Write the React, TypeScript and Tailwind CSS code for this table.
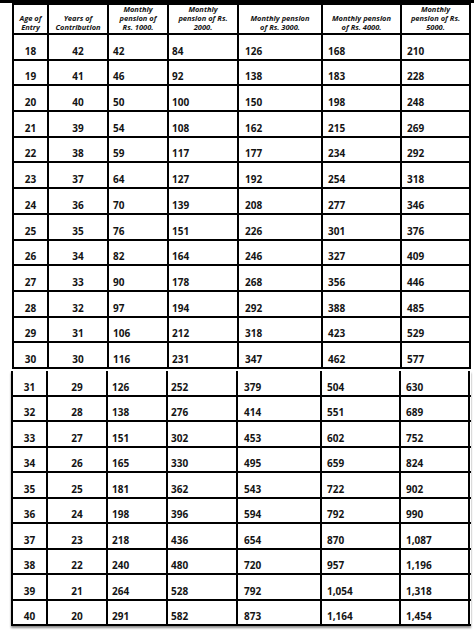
const upperRows: string[][] = [
  ["18", "42", "42", "84", "126", "168", "210"],
  ["19", "41", "46", "92", "138", "183", "228"],
  ["20", "40", "50", "100", "150", "198", "248"],
  ["21", "39", "54", "108", "162", "215", "269"],
  ["22", "38", "59", "117", "177", "234", "292"],
  ["23", "37", "64", "127", "192", "254", "318"],
  ["24", "36", "70", "139", "208", "277", "346"],
  ["25", "35", "76", "151", "226", "301", "376"],
  ["26", "34", "82", "164", "246", "327", "409"],
  ["27", "33", "90", "178", "268", "356", "446"],
  ["28", "32", "97", "194", "292", "388", "485"],
  ["29", "31", "106", "212", "318", "423", "529"],
  ["30", "30", "116", "231", "347", "462", "577"],
]

const lowerRows: string[][] = [
  ["31", "29", "126", "252", "379", "504", "630"],
  ["32", "28", "138", "276", "414", "551", "689"],
  ["33", "27", "151", "302", "453", "602", "752"],
  ["34", "26", "165", "330", "495", "659", "824"],
  ["35", "25", "181", "362", "543", "722", "902"],
  ["36", "24", "198", "396", "594", "792", "990"],
  ["37", "23", "218", "436", "654", "870", "1,087"],
  ["38", "22", "240", "480", "720", "957", "1,196"],
  ["39", "21", "264", "528", "792", "1,054", "1,318"],
  ["40", "20", "291", "582", "873", "1,164", "1,454"],
]

// fixed column widths + per-column text placement, measured off the scan
const colClass = [
  "w-[35px] justify-center",
  "w-[60px] justify-center",
  "w-[60px] justify-start pl-[4px]",
  "w-[70px] justify-start pl-[3px]",
  "w-[84px] justify-start pl-[6px]",
  "w-[79px] justify-start pl-[5px]",
  "w-[69px] justify-start pl-[5px]",
]

const headerWidth = [
  "w-[35px]",
  "w-[60px]",
  "w-[60px]",
  "w-[70px]",
  "w-[84px]",
  "w-[79px]",
  "w-[69px]",
]

const headers: string[][] = [
  ["Age of", "Entry"],
  ["Years of", "Contribution"],
  ["Monthly", "pension of", "Rs. 1000."],
  ["Monthly", "pension of Rs.", "2000."],
  ["Monthly pension", "of Rs. 3000."],
  ["Monthly pension", "of Rs. 4000."],
  ["Monthly", "pension of Rs.", "5000."],
]

function Row({ cells, height }: { cells: string[]; height: string }) {
  return (
    <div className={`flex border-b-2 border-black ${height}`}>
      {cells.map((c, i) => (
        <div
          key={i}
          className={`flex shrink-0 items-end border-r-2 border-black pb-[2px] text-[10px] leading-[12px] font-bold text-[#141414] ${colClass[i]}`}
        >
          {c}
        </div>
      ))}
    </div>
  )
}

export default function App() {
  return (
    <div
      className="h-[632px] w-[474px] overflow-hidden bg-white"
      style={{ fontFamily: '"Open Sans", "Liberation Sans", sans-serif' }}
    >
      <div className="h-[3px] bg-black" />

      {/* upper block: header + ages 18–30 */}
      <div className="ml-[12px] w-[459px] border-l-2 border-t-2 border-black">
        <div className="flex h-[30px] border-b-2 border-black">
          {headers.map((lines, i) => (
            <div
              key={i}
              className={`flex shrink-0 flex-col items-center justify-end border-r-2 border-black pb-[1px] text-center text-[7.5px] leading-[9px] font-bold italic text-[#141414] ${headerWidth[i]}`}
            >
              {lines.map((l, j) => (
                <span key={j} className="whitespace-nowrap">
                  {l}
                </span>
              ))}
            </div>
          ))}
        </div>
        {upperRows.map((r) => (
          <Row key={r[0]} cells={r} height="h-[25.7px]" />
        ))}
      </div>

      {/* lower block: ages 31–40, printed on a separate strip */}
      <div className="mt-[2px] ml-[11px] w-[460px] border-l-2 border-black shadow-[0_2px_2px_rgba(0,0,0,0.45)]">
        {lowerRows.map((r, i) => (
          <Row key={r[0]} cells={r} height={i === 0 ? "h-[26px]" : "h-[25.5px]"} />
        ))}
      </div>
    </div>
  )
}
